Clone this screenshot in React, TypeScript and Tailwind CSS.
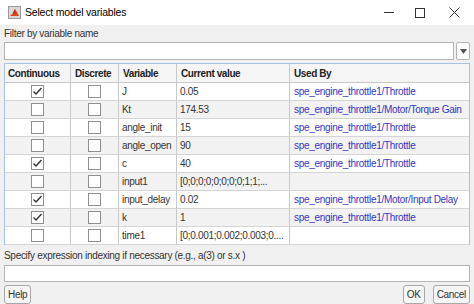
import React from 'react';

type Row = {
  cont: boolean;
  disc: boolean;
  name: string;
  value: string;
  usedBy: string;
};

const rows: Row[] = [
  { cont: true, disc: false, name: 'J', value: '0.05', usedBy: 'spe_engine_throttle1/Throttle' },
  { cont: false, disc: false, name: 'Kt', value: '174.53', usedBy: 'spe_engine_throttle1/Motor/Torque Gain' },
  { cont: false, disc: false, name: 'angle_init', value: '15', usedBy: 'spe_engine_throttle1/Throttle' },
  { cont: false, disc: false, name: 'angle_open', value: '90', usedBy: 'spe_engine_throttle1/Throttle' },
  { cont: true, disc: false, name: 'c', value: '40', usedBy: 'spe_engine_throttle1/Throttle' },
  { cont: false, disc: false, name: 'input1', value: '[0;0;0;0;0;0;0;0;1;1;...', usedBy: '' },
  { cont: true, disc: false, name: 'input_delay', value: '0.02', usedBy: 'spe_engine_throttle1/Motor/Input Delay' },
  { cont: true, disc: false, name: 'k', value: '1', usedBy: 'spe_engine_throttle1/Throttle' },
  { cont: false, disc: false, name: 'time1', value: '[0;0.001;0.002;0.003;0....', usedBy: '' },
];

function CheckBox({ checked }: { checked: boolean }) {
  return (
    <div className="w-[13px] h-[13px] bg-white border border-[#8f8f8f] flex items-center justify-center">
      {checked && (
        <svg width="11" height="11" viewBox="0 0 11 11">
          <path d="M1.5 5.5 L4 8 L9.5 2" fill="none" stroke="#333" strokeWidth="1.4" />
        </svg>
      )}
    </div>
  );
}

function MatlabIcon() {
  return (
    <svg width="13" height="13" viewBox="0 0 13 13">
      <rect x="0.5" y="0.5" width="12" height="12" fill="#d8d8d8" stroke="#9a9a9a" />
      <path d="M2 10 L5 7 L7 3 L9 6 L11 10 Z" fill="#e0481c" />
      <path d="M5 7 L7 3 L7.5 8 Z" fill="#b02a10" />
    </svg>
  );
}

const cols = 'grid grid-cols-[66px_48px_58px_113px_1fr]';

export default function App() {
  return (
    <div
      className="w-[474px] h-[304px] bg-[#f0f0f0] flex flex-col text-[10px] tracking-[-0.3px] text-[#222] overflow-hidden"
      style={{ fontFamily: '"Liberation Sans", Arial, sans-serif' }}
    >
      {/* Title bar */}
      <div className="h-[25px] bg-white flex items-center shrink-0">
        <div className="pl-[8px] pr-[4px] flex items-center">
          <MatlabIcon />
        </div>
        <span className="text-[10.5px] tracking-[-0.2px] text-black">Select model variables</span>
        <div className="ml-auto flex items-center h-full">
          <div className="w-[34px] flex justify-center">
            <div className="w-[10px] h-px bg-[#333]" />
          </div>
          <div className="w-[28px] flex justify-center">
            <div className="w-[10px] h-[10px] border border-[#333]" />
          </div>
          <div className="w-[40px] flex justify-center">
            <svg width="11" height="11" viewBox="0 0 11 11">
              <path d="M0.5 0.5 L10.5 10.5 M10.5 0.5 L0.5 10.5" stroke="#333" strokeWidth="1" />
            </svg>
          </div>
        </div>
      </div>

      <div className="flex flex-col px-[4px]">
        {/* Filter */}
        <div className="h-[15px] mt-[1px] flex items-end text-[#333]">Filter by variable name</div>
        <div className="flex gap-[2px] mt-[1px] h-[18px]">
          <div className="flex-1 bg-white border border-[#b5b5b5]" />
          <div className="w-[14px] bg-white border border-[#b5b5b5] rounded-[2px] flex items-center justify-center">
            <svg width="7" height="5" viewBox="0 0 7 5">
              <path d="M0 0 L7 0 L3.5 5 Z" fill="#555" />
            </svg>
          </div>
        </div>

        {/* Table */}
        <div className="mt-[3px] border border-[#a7c3e2] bg-white h-[182px]">
          <div className={`${cols} h-[19px] bg-[#f5f5f5] border-b border-[#c8c8c8] font-bold tracking-[-0.4px]`}>
            <div className="pl-[3px] flex items-center border-r border-[#c8c8c8]">Continuous</div>
            <div className="pl-[4px] flex items-center border-r border-[#c8c8c8]">Discrete</div>
            <div className="pl-[4px] flex items-center border-r border-[#c8c8c8]">Variable</div>
            <div className="pl-[4px] flex items-center border-r border-[#c8c8c8]">Current value</div>
            <div className="pl-[4px] flex items-center">Used By</div>
          </div>
          {rows.map((r, i) => (
            <div
              key={r.name}
              className={`${cols} h-[18px] border-b border-[#d4d4d4] ${i % 2 === 1 ? 'bg-[#f2f2f2]' : 'bg-white'}`}
            >
              <div className="flex items-center justify-center border-r border-[#c8c8c8]">
                <CheckBox checked={r.cont} />
              </div>
              <div className="flex items-center justify-center border-r border-[#c8c8c8]">
                <CheckBox checked={r.disc} />
              </div>
              <div className="pl-[3px] flex items-center border-r border-[#c8c8c8] text-[#333] whitespace-nowrap overflow-hidden">
                {r.name}
              </div>
              <div className="pl-[3px] flex items-center border-r border-[#c8c8c8] text-[#333] whitespace-nowrap overflow-hidden">
                {r.value}
              </div>
              <div className="pl-[4px] flex items-center text-[#3434c8] whitespace-nowrap overflow-hidden">
                {r.usedBy}
              </div>
            </div>
          ))}
        </div>

        {/* Expression indexing */}
        <div className="h-[15px] mt-[3px] flex items-end text-[#333]">
          Specify expression indexing if necessary (e.g., a(3) or s.x )
        </div>
        <div className="mt-[2px] h-[17px] bg-white border border-[#b5b5b5]" />

        {/* Buttons */}
        <div className="flex mt-[3px] h-[19px]">
          <button className="px-[3px] h-full bg-[#f6f6f6] border border-[#a8a8a8] rounded-[3px] text-[#333]">
            Help
          </button>
          <button className="ml-auto px-[3px] h-full bg-[#f6f6f6] border border-[#a8a8a8] rounded-[3px] text-[#333]">
            OK
          </button>
          <button className="ml-[8px] px-[3px] h-full bg-[#f6f6f6] border border-[#a8a8a8] rounded-[3px] text-[#333]">
            Cancel
          </button>
        </div>
      </div>
    </div>
  );
}
